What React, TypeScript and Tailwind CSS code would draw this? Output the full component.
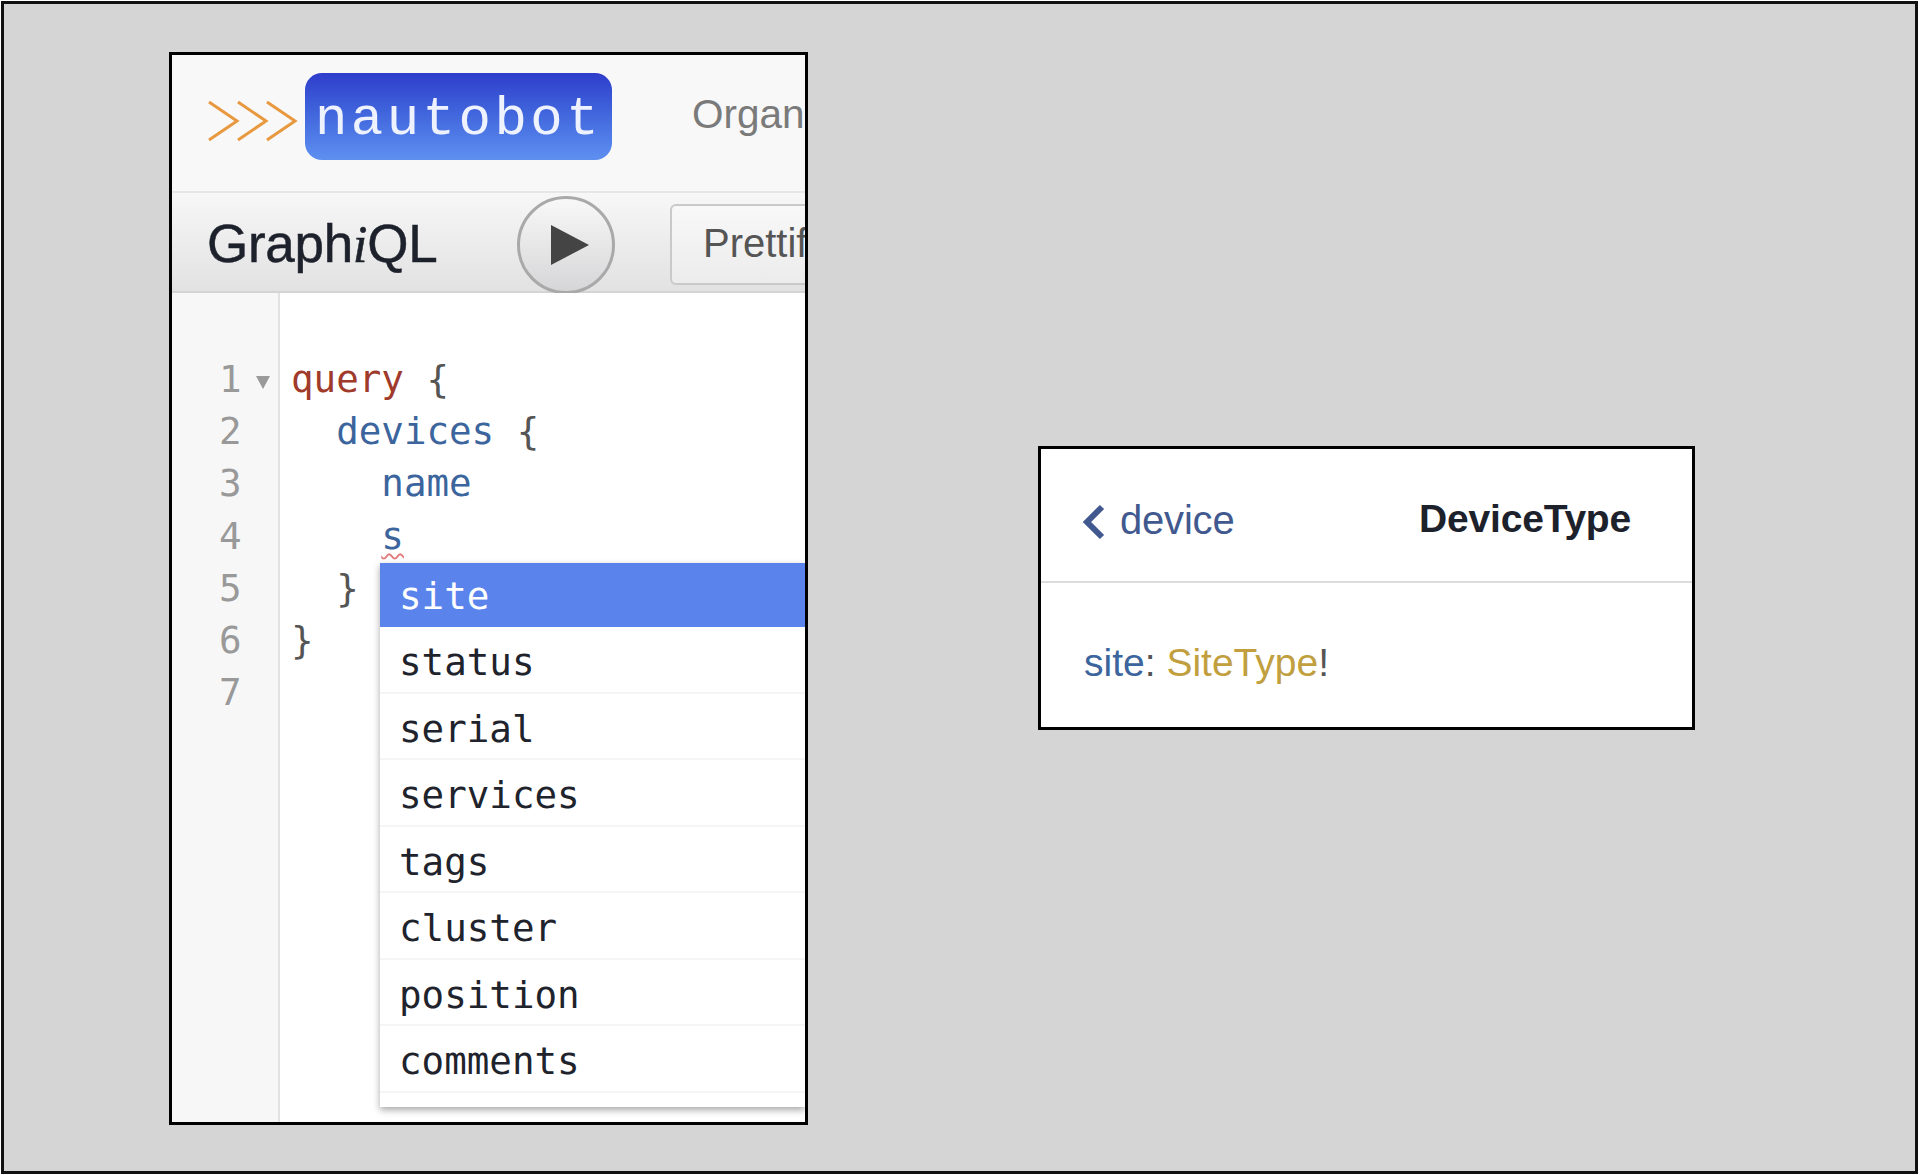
import React from 'react';

const HINTS = ['status', 'serial', 'services', 'tags', 'cluster', 'position', 'comments'];

const LINE_NUMBERS = [1, 2, 3, 4, 5, 6, 7];

const Logo: React.FC = () => (
  <div className="flex items-center">
    <svg width="92" height="42" viewBox="0 0 92 42" fill="none" stroke="#e8983f" strokeWidth="3" className="mt-[12px] mr-[6px]">
      <path d="M2 2 L30 21 L2 40" />
      <path d="M31 2 L59 21 L31 40" />
      <path d="M60 2 L88 21 L60 40" />
    </svg>
    <div className="w-[307px] h-[87px] mt-[2px] rounded-[17px] bg-gradient-to-b from-[#2f3ccb] to-[#5e90f0] flex items-center justify-center pt-[8px]">
      <span className="font-['Liberation_Mono',monospace] text-[54px] leading-none tracking-[3.5px] text-[#eef2ff]">nautobot</span>
    </div>
  </div>
);

const Editor: React.FC = () => (
  <div className="flex-1 flex relative min-h-0 bg-white font-['DejaVu_Sans_Mono',monospace] text-[37.5px]">
    {/* Gutter */}
    <div className="w-[108px] shrink-0 bg-[#f7f7f7] border-r-2 border-[#e2e2e2] pt-[60px] pl-[47px] text-[#999999]">
      {LINE_NUMBERS.map((n) => (
        <div key={n} className="h-[52.2px] leading-[52px] flex items-center">
          {n}
          {n === 1 && (
            <svg width="14" height="14" viewBox="0 0 14 14" className="ml-[14px] mt-[6px]">
              <path d="M0 1 H14 L7 14 Z" fill="#9a9a9a" />
            </svg>
          )}
        </div>
      ))}
    </div>

    {/* Code */}
    <div className="pt-[60px] pl-[11px] text-[#555555] whitespace-pre">
      <div className="h-[52.2px] leading-[52px]"><span className="text-[#a03a2a]">query</span> {'{'}</div>
      <div className="h-[52.2px] leading-[52px]">  <span className="text-[#3b659c]">devices</span> {'{'}</div>
      <div className="h-[52.2px] leading-[52px] text-[#3b659c]">    name</div>
      <div className="h-[52.2px] leading-[52px] text-[#3b659c]">    <span className="underline decoration-wavy decoration-[#e27a7a] decoration-2 underline-offset-[4px]">s</span></div>
      <div className="h-[52.2px] leading-[52px]">  {'}'}</div>
      <div className="h-[52.2px] leading-[52px]">{'}'}</div>
    </div>

    {/* Autocomplete */}
    <div className="absolute left-[208px] right-0 top-[270px] h-[544px] bg-white shadow-[0_3px_7px_rgba(0,0,0,0.35)] text-[#20232c]">
      <div className="h-[64px] leading-[66px] pl-[19px] bg-[#5a84ec] text-white">site</div>
      {HINTS.map((h) => (
        <div key={h} className="h-[66.5px] leading-[70px] pl-[19px] border-b-2 border-[#f5f5f5]">{h}</div>
      ))}
    </div>
  </div>
);

export default function App() {
  return (
    <div className="w-[1920px] h-[1175px] bg-white pt-[1px] pl-[1px]">
      <div className="w-[1917px] h-[1173px] box-border border-[3px] border-[#111111] bg-[#d5d5d5] flex items-start pl-[165px] pt-[48px]">
        {/* Left panel */}
        <div className="w-[639px] h-[1073px] shrink-0 box-border border-[3px] border-black overflow-hidden flex flex-col bg-white font-['Liberation_Sans',sans-serif]">
          <div className="h-[138px] shrink-0 bg-[#f8f8f8] border-b-2 border-[#e6e6e6] flex items-center pl-[35px] pb-[16px] whitespace-nowrap">
            <Logo />
            <span className="ml-[80px] mb-[2px] text-[40.5px] text-[#7a7a7a]">Organi</span>
          </div>

          <div className="h-[100px] shrink-0 bg-gradient-to-b from-[#f7f7f7] to-[#e2e2e2] border-b-2 border-[#d4d4d4] flex items-center pl-[35px] pt-[4px] relative whitespace-nowrap">
            <span className="w-[309px] text-[53px] tracking-[-0.3px] text-[#1d212b] [-webkit-text-stroke:0.5px_#1d212b]">
              Graph<span className="italic font-['Liberation_Serif',serif]">i</span>QL
            </span>
            <button className="absolute left-[345px] top-[3px] w-[98px] h-[98px] rounded-full border-[3px] border-[#a9a9a9] bg-gradient-to-b from-[#f8f8f8] to-[#d6d6d8] flex items-center justify-center">
              <svg width="38" height="40" viewBox="0 0 38 40" className="ml-[7px]">
                <path d="M0 0 L38 20 L0 40 Z" fill="#444444" />
              </svg>
            </button>
            <button className="absolute left-[498px] top-[11px] w-[180px] h-[81px] rounded-[6px] border-2 border-[#c9c9c9] bg-gradient-to-b from-[#f8f8f8] to-[#ececec] text-left pl-[31px] pb-[4px] text-[40px] text-[#555555]">
              Prettify
            </button>
          </div>

          <Editor />
        </div>

        {/* Type panel */}
        <div className="ml-[230px] mt-[394px] w-[657px] h-[284px] shrink-0 box-border border-[3px] border-black bg-white font-['Liberation_Sans',sans-serif] text-[40px]">
          <div className="h-[134px] border-b-2 border-[#dcdcdc] flex items-center justify-between pl-[41px] pr-[61px] pt-[9px]">
            <div className="flex items-center text-[#41598f] tracking-[-0.2px]">
              <svg width="24" height="36" viewBox="0 0 24 36" fill="none" stroke="#41598f" strokeWidth="6" className="mt-[4px] mr-[14px]">
                <path d="M20 3 L5 18 L20 33" />
              </svg>
              device
            </div>
            <span className="font-bold text-[39px] tracking-[-0.2px] text-[#1d212b]">DeviceType</span>
          </div>
          <div className="pl-[43px] pt-[57px] text-[39px] leading-[46px] text-[#555555]">
            <span className="text-[#3b659c]">site</span>: <span className="text-[#c19f3f]">SiteType</span>!
          </div>
        </div>
      </div>
    </div>
  );
}
